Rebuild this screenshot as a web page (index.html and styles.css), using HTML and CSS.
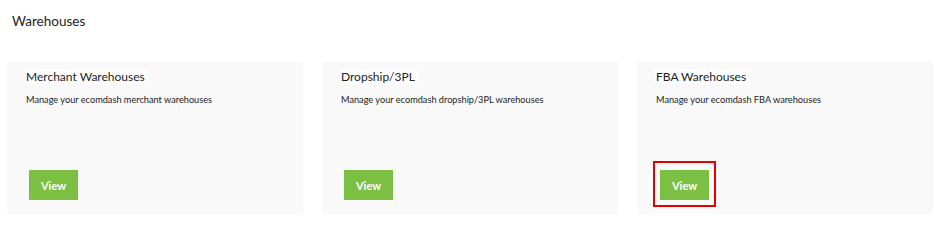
FILE: index.html
```html
<!DOCTYPE html>
<html>
<head>
<meta charset="utf-8">
<link rel="stylesheet" href="styles.css">
</head>
<body>
<h1 class="page-title">Warehouses</h1>
<div class="cards">
  <div class="card">
    <div class="card-title">Merchant Warehouses</div>
    <p class="card-desc">Manage your ecomdash merchant warehouses</p>
    <div class="card-action"><a class="btn">View</a></div>
  </div>
  <div class="card">
    <div class="card-title">Dropship/3PL</div>
    <p class="card-desc">Manage your ecomdash dropship/3PL warehouses</p>
    <div class="card-action"><a class="btn">View</a></div>
  </div>
  <div class="card">
    <div class="card-title">FBA Warehouses</div>
    <p class="card-desc">Manage your ecomdash FBA warehouses</p>
    <div class="card-action highlight"><a class="btn">View</a></div>
  </div>
</div>
</body>
</html>
```
FILE: styles.css
```css
body {
  margin: 0;
  background: #ffffff;
  font-family: Lato, "Open Sans", sans-serif;
  color: #222;
}
.page-title {
  margin: 0;
  padding: 13px 0 0 12px;
  font-size: 13.5px;
  font-weight: 400;
  line-height: 17px;
  color: #222;
}
.cards {
  display: grid;
  grid-template-columns: repeat(3, 296px);
  column-gap: 19px;
  padding-left: 7px;
  margin-top: 32px;
}
.card {
  background: #f9f9f9;
  height: 152px;
  box-sizing: border-box;
  padding: 7px 0 0 18px;
  display: flex;
  flex-direction: column;
  align-items: flex-start;
}
.card-title {
  background: #ffffff;
  font-size: 12px;
  line-height: 15px;
  padding: 0 3px 0 1px;
  color: #222;
}
.card-desc {
  margin: 10px 0 0 1px;
  font-size: 9.2px;
  line-height: 12px;
  color: #222;
}
.card-action {
  margin-top: auto;
  margin-bottom: 14px;
  margin-left: 4px;
}
.card-action.highlight {
  border: 2px solid #e00000;
  padding: 7px 5px 5px 5px;
  margin: auto 0 7px -2px;
}
.btn {
  display: flex;
  align-items: center;
  justify-content: center;
  width: 49px;
  height: 30px;
  background: #7bc043;
  color: #ffffff;
  font-size: 11px;
  font-weight: 700;
  text-decoration: none;
}
```
